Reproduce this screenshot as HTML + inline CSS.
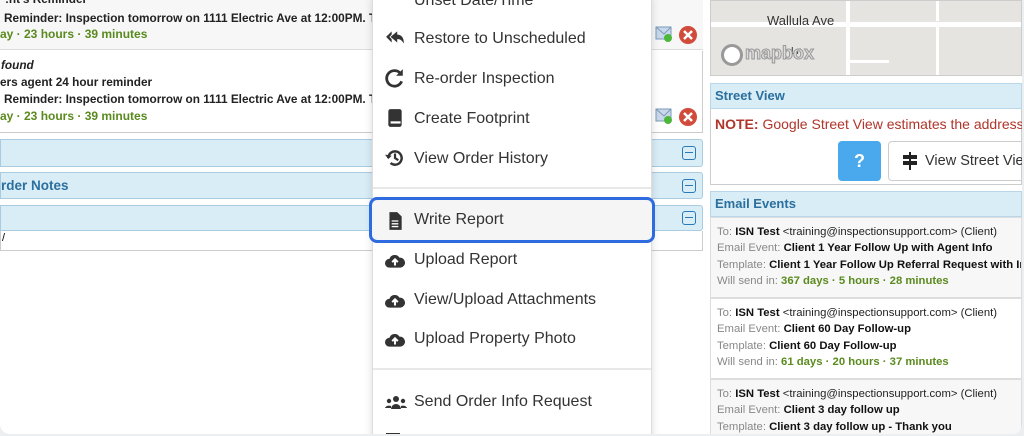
<!DOCTYPE html>
<html><head><meta charset="utf-8"><style>
*{box-sizing:border-box;margin:0;padding:0}
body{width:1024px;height:436px;overflow:hidden;background:#eceff1;font-family:"Liberation Sans",sans-serif;position:relative}
.frame{position:absolute;left:0;top:0;width:1022px;height:434px;background:#fff;border-radius:0 0 10px 10px;overflow:hidden}
.a{position:absolute}
.lt{font-size:11.8px;font-weight:bold;color:#222;white-space:nowrap}
.gr{color:#5a8a1e;font-size:12px;font-weight:bold;white-space:nowrap}
.bar{position:absolute;left:0;width:703px;background:#d9edf7;border:1px solid #aacbe0;border-radius:0 3px 3px 0}
.min{position:absolute;right:6px;top:6px;width:14px;height:14px;border:1.8px solid #2a7ab8;border-radius:3px}
.min:after{content:"";position:absolute;left:2px;right:2px;top:4.5px;height:1.8px;background:#2a7ab8}
.menu{position:absolute;left:372px;top:-5px;width:280px;height:450px;background:#fff;border:1px solid #ddd;box-shadow:0 2px 8px rgba(0,0,0,.15)}
.mi{position:absolute;left:41px;font-size:16px;color:#333;white-space:nowrap}
.ic{position:absolute;left:12px;width:20px;height:20px}
.sep{position:absolute;left:0;right:0;height:2px;background:#e8e8e8}
.rh{position:absolute;left:710px;width:312px;background:#d9edf7;border:1px solid #b8d7ea;color:#2a6f9e;font-weight:bold;font-size:13px;padding:4px 4px}
.ev{position:absolute;left:710px;width:312px;border:1px solid #ddd;font-size:11.3px;line-height:16.3px;padding:6px 6px;color:#222;white-space:nowrap;overflow:hidden}
.lb{color:#888}
.ev b{color:#111}
.ev .g{color:#5a8a1e;font-weight:bold}
</style></head><body><div class="frame">
<div class="a" style="left:0;top:0;width:703px;height:50px;background:#f7f7f7;border-bottom:1px solid #ddd"></div>
<div class="a lt" style="left:5px;top:-8px">:nt's Reminder</div>
<div class="a lt" style="left:4px;top:11px">Reminder: Inspection tomorrow on 1111 Electric Ave at 12:00PM. Th</div>
<div class="a gr" style="left:0;top:27px">ay · 23 hours · 39 minutes</div>
<div class="a" style="left:0;top:51px;width:703px;height:82px;background:#fff;border-right:1px solid #ccc;border-bottom:1px solid #ccc"></div>
<div class="a lt" style="left:1px;top:58px;font-style:italic">found</div>
<div class="a lt" style="left:0;top:75px">ers agent 24 hour reminder</div>
<div class="a lt" style="left:4px;top:92px">Reminder: Inspection tomorrow on 1111 Electric Ave at 12:00PM. Th</div>
<div class="a gr" style="left:0;top:109px">ay · 23 hours · 39 minutes</div>
<svg class="a" style="left:655px;top:24px" width="44" height="22"><rect x="1" y="3" width="15" height="12" fill="#c8d8ea" stroke="#7a9ab8"/><path d="M1 3l8 7 7-7" fill="none" stroke="#7a9ab8"/><circle cx="13" cy="14" r="4" fill="#4cb83a"/><circle cx="33" cy="11" r="9" fill="#d14b3a"/><path d="M29 7l8 8M37 7l-8 8" stroke="#fff" stroke-width="2.5"/></svg>
<svg class="a" style="left:655px;top:106px" width="44" height="22"><rect x="1" y="3" width="15" height="12" fill="#c8d8ea" stroke="#7a9ab8"/><path d="M1 3l8 7 7-7" fill="none" stroke="#7a9ab8"/><circle cx="13" cy="14" r="4" fill="#4cb83a"/><circle cx="33" cy="11" r="9" fill="#d14b3a"/><path d="M29 7l8 8M37 7l-8 8" stroke="#fff" stroke-width="2.5"/></svg>
<div class="bar" style="top:139px;height:28px"><div class="min"></div></div>
<div class="bar" style="top:172px;height:27px"><span style="position:absolute;left:0;top:5px;color:#2a6f9e;font-weight:bold;font-size:13.5px">rder Notes</span><div class="min"></div></div>
<div class="bar" style="top:205px;height:26px"><div class="min" style="top:5px"></div></div>
<div class="a" style="left:0;top:231px;width:703px;height:20px;border:1px solid #ccc;border-top:none;background:#fff;font-size:11px;padding:1px">/</div>
<div class="menu">
<div class="mi" style="top:-4px">Unset Date/Time</div>
<svg class="ic" style="top:32px" viewBox="0 0 18 18"><path d="M1 8l5-5v3l-2 2 2 2v3zM5 8l6-5v3c4 0 6 3 6 8-2-3-3-4-6-4v3z" fill="#333"/></svg>
<div class="mi" style="top:34px">Restore to Unscheduled</div>
<svg class="ic" style="top:72px" viewBox="0 0 18 18"><path d="M14 5A7 7 0 1 0 15 12" fill="none" stroke="#333" stroke-width="2.5"/><path d="M16 1v6h-6z" fill="#333"/></svg>
<div class="mi" style="top:74px">Re-order Inspection</div>
<svg class="ic" style="top:112px" viewBox="0 0 18 18"><rect x="3" y="1" width="12" height="16" rx="2" fill="#333"/><rect x="5" y="12" width="9" height="2" fill="#fff"/></svg>
<div class="mi" style="top:114px">Create Footprint</div>
<svg class="ic" style="top:152px" viewBox="0 0 18 18"><path d="M3 9a6 6 0 1 1 2 4.5" fill="none" stroke="#333" stroke-width="2.2"/><path d="M0 6l3 4 3-3z" fill="#333"/><path d="M9 5v4l3 2" fill="none" stroke="#333" stroke-width="2"/></svg>
<div class="mi" style="top:154px">View Order History</div>
<div class="sep" style="top:191px"></div>
<div class="a" style="left:-4px;top:201px;width:286px;height:46px;border:3.5px solid #2e6be0;border-radius:8px;background:#f5f5f5"></div>
<svg class="ic" style="top:215px" viewBox="0 0 18 18"><path d="M4 1h7l4 4v12H4z" fill="#333"/><path d="M6 9h6M6 11.5h6M6 14h6" stroke="#fff" stroke-width="1.2"/></svg>
<div class="mi" style="top:215px">Write Report</div>
<svg class="ic" style="top:255px" viewBox="0 0 18 18"><path d="M4 15a4 4 0 0 1 0-8 5 5 0 0 1 9-1 4.5 4.5 0 0 1 1 9z" fill="#333"/><path d="M9 13V8M6.5 10L9 7.5 11.5 10" stroke="#fff" stroke-width="1.8" fill="none"/></svg>
<div class="mi" style="top:255px">Upload Report</div>
<svg class="ic" style="top:295px" viewBox="0 0 18 18"><path d="M4 15a4 4 0 0 1 0-8 5 5 0 0 1 9-1 4.5 4.5 0 0 1 1 9z" fill="#333"/><path d="M9 13V8M6.5 10L9 7.5 11.5 10" stroke="#fff" stroke-width="1.8" fill="none"/></svg>
<div class="mi" style="top:295px">View/Upload Attachments</div>
<svg class="ic" style="top:334px" viewBox="0 0 18 18"><path d="M4 15a4 4 0 0 1 0-8 5 5 0 0 1 9-1 4.5 4.5 0 0 1 1 9z" fill="#333"/><path d="M9 13V8M6.5 10L9 7.5 11.5 10" stroke="#fff" stroke-width="1.8" fill="none"/></svg>
<div class="mi" style="top:334px">Upload Property Photo</div>
<div class="sep" style="top:372px"></div>
<svg class="ic" style="top:397px;width:22px" viewBox="0 0 22 18"><circle cx="11" cy="5" r="3" fill="#333"/><circle cx="4" cy="7" r="2.2" fill="#333"/><circle cx="18" cy="7" r="2.2" fill="#333"/><path d="M6 15a5 5 0 0 1 10 0zM0 14a4 3 0 0 1 6-2v2zM22 14a4 3 0 0 0-6-2v2z" fill="#333"/></svg>
<div class="mi" style="top:397px">Send Order Info Request</div>
<div class="a" style="left:13px;top:437px;width:14px;height:10px;background:#333"></div>
</div>
<div class="a" style="left:710px;top:0;width:312px;height:76px;background:#e6e4e0;border:1px solid #ccc;overflow:hidden">
<div class="a" style="left:0;top:21px;width:312px;height:5px;background:#fff"></div>
<div class="a" style="left:135px;top:0;width:4px;height:76px;background:#fff"></div>
<div class="a" style="left:225px;top:0;width:3px;height:20px;background:#fff"></div>
<div class="a" style="left:225px;top:26px;width:3px;height:50px;background:#fff"></div>
<div class="a" style="left:138px;top:59px;width:40px;height:3px;background:#fff"></div>
<div class="a" style="left:56px;top:12px;font-size:13px;color:#333">Wallula Ave</div>
<div class="a" style="left:80px;top:45px;font-size:10px;color:#333">Ln</div>
<div class="a" style="left:10px;top:43px;width:22px;height:22px;border-radius:50%;border:3px solid #999;background:#fff"></div>
<div class="a" style="left:34px;top:42px;font-size:18px;font-weight:bold;color:#ddd;-webkit-text-stroke:1px #999">mapbox</div>
</div>
<div class="rh" style="top:83px;height:26px">Street View</div>
<div class="a" style="left:710px;top:109px;width:312px;height:76px;border:1px solid #ccc;border-top:none"></div>
<div class="a" style="left:715px;top:116px;font-size:14px;color:#b0352a;white-space:nowrap"><b>NOTE:</b> Google Street View estimates the address</div>
<div class="a" style="left:838px;top:141px;width:43px;height:40px;background:#4aa9ec;border-radius:4px;color:#fff;font-weight:bold;font-size:18px;text-align:center;line-height:40px">?</div>
<div class="a" style="left:888px;top:141px;width:140px;height:40px;border:1px solid #ccc;border-radius:4px;font-size:14.5px;color:#333;line-height:38px;padding-left:36px;white-space:nowrap">View Street View</div>
<svg class="a" style="left:902px;top:152px" width="16" height="18"><path d="M7 0h2v18H7z" fill="#222"/><rect x="1" y="3" width="14" height="4" fill="#222"/><rect x="1" y="9" width="14" height="4" fill="#222"/></svg>
<div class="rh" style="top:191px;height:26px">Email Events</div>
<div class="ev" style="top:217px;height:81px;background:#f7f7f7"><span class="lb">To:</span> <b>ISN Test</b> &lt;training@inspectionsupport.com&gt; (Client)<br><span class="lb">Email Event:</span> <b>Client 1 Year Follow Up with Agent Info</b><br><span class="lb">Template:</span> <b>Client 1 Year Follow Up Referral Request with In</b><br><span class="lb">Will send in:</span> <span class="g">367 days · 5 hours · 28 minutes</span></div>
<div class="ev" style="top:298px;height:81px;background:#fff"><span class="lb">To:</span> <b>ISN Test</b> &lt;training@inspectionsupport.com&gt; (Client)<br><span class="lb">Email Event:</span> <b>Client 60 Day Follow-up</b><br><span class="lb">Template:</span> <b>Client 60 Day Follow-up</b><br><span class="lb">Will send in:</span> <span class="g">61 days · 20 hours · 37 minutes</span></div>
<div class="ev" style="top:379px;height:70px;background:#f7f7f7"><span class="lb">To:</span> <b>ISN Test</b> &lt;training@inspectionsupport.com&gt; (Client)<br><span class="lb">Email Event:</span> <b>Client 3 day follow up</b><br><span class="lb">Template:</span> <b>Client 3 day follow up - Thank you</b></div>
</div></body></html>
